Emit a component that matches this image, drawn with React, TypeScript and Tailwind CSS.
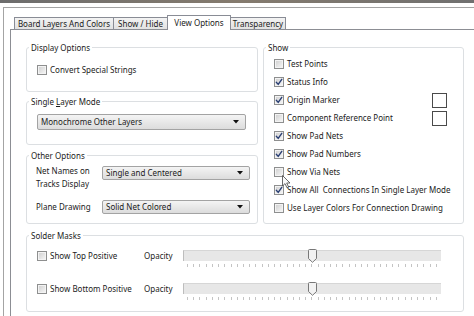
import React from "react";

const Check = ({ on = false }: { on?: boolean }) => (
  <span className="w-[10px] h-[10px] shrink-0 border border-[#8e8f8f] bg-gradient-to-br from-[#cdcdcd] via-[#e3e3e3] to-[#f8f8f8] shadow-[inset_0_0_0_1px_#f3f3f3] flex items-center justify-center">
    {on && (
      <svg width="8" height="8" viewBox="0 0 8 8">
        <path d="M1.3 4.3 L3.2 6.4 L6.8 1.3" stroke="#2a3f74" strokeWidth="1.4" fill="none" strokeLinecap="round" strokeLinejoin="round" />
      </svg>
    )}
  </span>
);

const Select = ({ text, h }: { text: string; h: string }) => (
  <div className={`${h} flex items-center justify-between border border-[#a3a3a3] rounded-[2px] bg-gradient-to-b from-[#f4f4f4] to-[#dcdcdc] pl-[3px] pr-[6px]`}>
    <span className="leading-none">{text}</span>
    <svg width="6" height="4" viewBox="0 0 6 4">
      <path d="M0 0 H6 L3 3.5 Z" fill="#111" />
    </svg>
  </div>
);

const Group = ({ title, className = "", children }: { title: React.ReactNode; className?: string; children: React.ReactNode }) => (
  <fieldset className={`border border-[#dcdfe2] rounded-[3px] min-w-0 ${className}`}>
    <legend className="ml-[2px] px-[2px] leading-[13px]">{title}</legend>
    {children}
  </fieldset>
);

const Slider = () => (
  <div className="w-[258px] flex flex-col">
    <div className="relative h-[11px] bg-[#e7e7e7] border-l border-t border-l-[#bdbdbd] border-t-[#d6d6d6]">
      <svg className="absolute left-[124px] top-[-2px]" width="9" height="14" viewBox="0 0 9 14">
        <path d="M0.5 1.5 Q0.5 0.5 1.5 0.5 H7.5 Q8.5 0.5 8.5 1.5 V9.5 L4.5 13.3 L0.5 9.5 Z" fill="#f2f2f2" stroke="#777" />
      </svg>
    </div>
    <div className="mt-[3px] h-[3px] flex justify-between px-[4px]">
      {Array.from({ length: 41 }).map((_, i) => (
        <span key={i} className="w-px h-full bg-[#c4c4c4]" />
      ))}
    </div>
  </div>
);

const SliderRow = ({ label }: { label: string }) => (
  <div className="flex items-start">
    <div className="w-[107px] h-[11px] flex items-center gap-[3px]">
      <Check />
      <span className="leading-none">{label}</span>
    </div>
    <div className="w-[39px] h-[11px] flex items-center pt-[1px] leading-none">Opacity</div>
    <Slider />
  </div>
);

const showItems: { label: string; on: boolean; box?: boolean }[] = [
  { label: "Test Points", on: false },
  { label: "Status Info", on: true },
  { label: "Origin Marker", on: true, box: true },
  { label: "Component Reference Point", on: false, box: true },
  { label: "Show Pad Nets", on: true },
  { label: "Show Pad Numbers", on: true },
  { label: "Show Via Nets", on: false },
  { label: "Show All  Connections In Single Layer Mode", on: true },
  { label: "Use Layer Colors For Connection Drawing", on: false },
];

export default function App() {
  return (
    <div className="w-[474px] h-[316px] overflow-hidden bg-white text-[8px] text-[#1b1b1b] font-['Noto_Sans',sans-serif] flex flex-col relative">
      <div className="h-[3px] shrink-0 bg-gradient-to-r from-[#6d6d6d] via-[#857b6e] to-[#707070]" />
      <div className="h-[4px] shrink-0" />
      <div className="flex-1 ml-[3px] border-l border-t border-[#a4a4a4] flex flex-col pl-[6px]">
        <div className="h-[21px] flex items-end pl-[4px] shrink-0">
          <div className="w-[100px] h-[12px] border border-b-0 border-[#898c95] bg-gradient-to-b from-[#f3f3f3] to-[#e2e2e2] flex items-center justify-center leading-none">
            Board Layers And Colors
          </div>
          <div className="w-[55px] -ml-px h-[12px] border border-b-0 border-[#898c95] bg-gradient-to-b from-[#f3f3f3] to-[#e2e2e2] flex items-center justify-center leading-none">
            Show / Hide
          </div>
          <div className="relative z-10 w-[64px] -ml-px h-[15px] mb-[-1px] border border-b-0 border-[#898c95] bg-white flex items-center justify-center leading-none">
            View Options
          </div>
          <div className="w-[56px] -ml-px h-[12px] border border-b-0 border-[#898c95] bg-gradient-to-b from-[#f3f3f3] to-[#e2e2e2] flex items-center justify-center leading-none">
            Transparency
          </div>
        </div>
        <div className="flex-1 border-l border-t border-[#8c8e94] bg-white pl-[15px] pt-[11px] flex flex-col">
          <div className="flex gap-[5px] w-[438px]">
            <div className="w-[232px] flex flex-col">
              <Group title="Display Options">
                <div className="pl-[10px] pt-[10px] pb-[16px] flex items-center gap-[3px]">
                  <Check />
                  <span className="leading-[11px]">Convert Special Strings</span>
                </div>
              </Group>
              <Group title={<>Single <u>L</u>ayer Mode</>} className="mt-[3px]">
                <div className="pl-[10px] pr-[11px] pt-[6px] pb-[14px]">
                  <Select h="h-[16px]" text="Monochrome Other Layers" />
                </div>
              </Group>
              <Group title="Other Options" className="mt-[4px] flex-1">
                <div className="pl-[9px] pr-[7px] pt-[2px] pb-[9px] flex flex-col">
                  <div className="flex items-start">
                    <div className="w-[66px] leading-[13px]">
                      Net Names on
                      <br />
                      Tracks Display
                    </div>
                    <div className="flex-1 mt-[2px]">
                      <Select h="h-[14px]" text="Single and Centered" />
                    </div>
                  </div>
                  <div className="flex items-center mt-[10px]">
                    <div className="w-[66px] leading-none">Plane Drawing</div>
                    <div className="flex-1">
                      <Select h="h-[14px]" text="Solid Net Colored" />
                    </div>
                  </div>
                </div>
              </Group>
            </div>
            <Group title="Show" className="flex-1">
              <div className="pl-[10px] pr-[16px] pt-[1px] pb-[5px] flex flex-col">
                {showItems.map((it) => (
                  <div key={it.label} className="h-[18px] flex items-center gap-[3px]">
                    <Check on={it.on} />
                    <span className="flex-1 whitespace-pre leading-none">{it.label}</span>
                    {it.box && <span className="w-[15px] h-[15px] border-[1.5px] border-[#4a4a4a]" />}
                  </div>
                ))}
              </div>
            </Group>
          </div>
          <Group title="Solder Masks" className="mt-[5px] w-[438px]">
            <div className="pl-[10px] pt-[8px] pb-[11px] flex flex-col gap-[16px]">
              <SliderRow label="Show Top Positive" />
              <SliderRow label="Show Bottom Positive" />
            </div>
          </Group>
        </div>
      </div>
      <svg className="absolute left-[282px] top-[175px]" width="10" height="14" viewBox="0 0 10 14">
        <path d="M0.5 0.5 L0.5 11 L3 8.6 L5 12.8 L6.6 12 L4.7 8 L8 8 Z" fill="#fafafa" stroke="#444" strokeWidth="0.8" strokeLinejoin="round" />
      </svg>
    </div>
  );
}
